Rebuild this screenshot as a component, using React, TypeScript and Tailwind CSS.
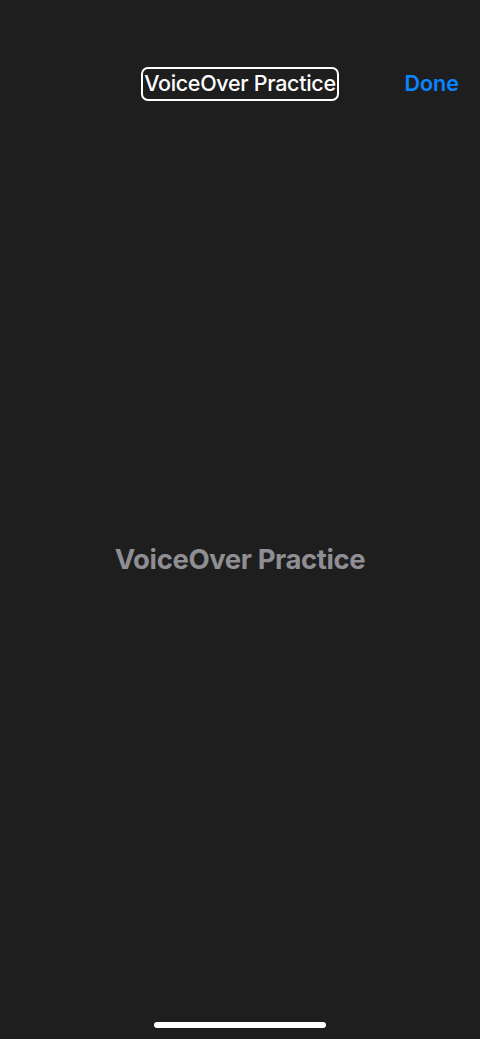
import React from "react"

export default function App() {
  return (
    <div
      className="h-[1039px] w-full bg-[#1e1e1e] flex flex-col"
      style={{ fontFamily: "Inter, 'Liberation Sans', sans-serif" }}
    >
      {/* Nav bar */}
      <div className="h-[110px] relative flex items-start justify-center pt-[67px]">
        <div className="border-2 border-white rounded-[7px] h-[34px] pl-[1px] pr-[1px] flex items-center">
          <span className="text-white text-[21.5px] font-medium tracking-[-0.3px] leading-none">
            VoiceOver Practice
          </span>
        </div>
        <button className="absolute right-[21px] top-[73px] text-[#0a84ff] text-[21.5px] font-semibold leading-none">
          Done
        </button>
      </div>

      {/* Content */}
      <div className="flex-1 flex items-center justify-center">
        <span className="text-[#8e8e93] text-[27.5px] font-bold tracking-[-0.4px]">VoiceOver Practice</span>
      </div>

      {/* Home indicator */}
      <div className="h-[29px] flex justify-center pt-[12px]">
        <div className="w-[172px] h-[6px] rounded-full bg-white" />
      </div>
    </div>
  )
}
